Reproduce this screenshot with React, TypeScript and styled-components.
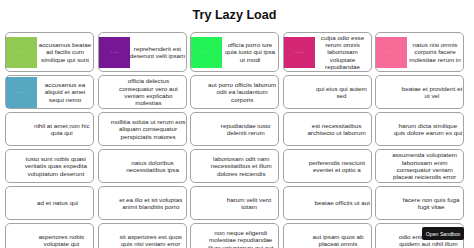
import React from 'react';
import styled, { createGlobalStyle } from 'styled-components';

const GlobalStyle = createGlobalStyle`
    html {
        scrollbar-width: none;
    }
    body {
        margin: 0;
        background: #ffffff;
        font-family: 'Liberation Sans', Arial, sans-serif;
        color: #2b2b2b;
    }
`;

type Photo = {
    id: number;
    title: string;
    color?: string;
};

const photos: Photo[] = [
    { id: 1, title: 'accusamus beatae ad facilis cum similique qui sunt', color: '#92c952' },
    { id: 2, title: 'reprehenderit est deserunt velit ipsam', color: '#771796' },
    { id: 3, title: 'officia porro iure quia iusto qui ipsa ut modi', color: '#24f355' },
    { id: 4, title: 'culpa odio esse rerum omnis laboriosam voluptate repudiandae', color: '#d32776' },
    { id: 5, title: 'natus nisi omnis corporis facere molestiae rerum in', color: '#f66b97' },
    { id: 6, title: 'accusamus ea aliquid et amet sequi nemo', color: '#56a8c2' },
    { id: 7, title: 'officia delectus consequatur vero aut veniam explicabo molestias' },
    { id: 8, title: 'aut porro officiis laborum odit ea laudantium corporis' },
    { id: 9, title: 'qui eius qui autem sed' },
    { id: 10, title: 'beatae et provident et ut vel' },
    { id: 11, title: 'nihil at amet non hic quia qui' },
    { id: 12, title: 'mollitia soluta ut rerum eos aliquam consequatur perspiciatis maiores' },
    { id: 13, title: 'repudiandae iusto deleniti rerum' },
    { id: 14, title: 'est necessitatibus architecto ut laborum' },
    { id: 15, title: 'harum dicta similique quis dolore earum ex qui' },
    { id: 16, title: 'iusto sunt nobis quasi veritatis quas expedita voluptatum deserunt' },
    { id: 17, title: 'natus doloribus necessitatibus ipsa' },
    { id: 18, title: 'laboriosam odit nam necessitatibus et illum dolores reiciendis' },
    { id: 19, title: 'perferendis nesciunt eveniet et optio a' },
    { id: 20, title: 'assumenda voluptatem laboriosam enim consequatur veniam placeat reiciendis error' },
    { id: 21, title: 'ad et natus qui' },
    { id: 22, title: 'et ea illo et sit voluptas animi blanditiis porro' },
    { id: 23, title: 'harum velit vero totam' },
    { id: 24, title: 'beatae officiis ut aut' },
    { id: 25, title: 'facere non quis fuga fugit vitae' },
    { id: 26, title: 'asperiores nobis voluptate qui' },
    { id: 27, title: 'sit asperiores est quos quis nisi veniam error' },
    { id: 28, title: 'non neque eligendi molestiae repudiandae illum voluptatem qui aut' },
    { id: 29, title: 'aut ipsam quos ab placeat omnis' },
    { id: 30, title: 'odio enim voluptatem quidem aut nihil illum' },
];

const Page = styled.div`
    padding: 8px 10px 8px 5px;
`;

const Title = styled.h1`
    margin: 0 0 10px;
    font-size: 12.6px;
    font-weight: 700;
    line-height: normal;
    text-align: center;
    color: #111111;
`;

const Grid = styled.div`
    display: grid;
    grid-template-columns: repeat(5, 89px);
    column-gap: 3.5px;
    row-gap: 3px;
`;

const Card = styled.div`
    display: flex;
    align-items: center;
    padding: 0.5px 0;
    border: 1px solid #a3a3a3;
    border-radius: 5px;
    min-width: 0;
`;

const Thumb = styled.div<{ $color?: string }>`
    display: flex;
    align-items: center;
    justify-content: center;
    width: 31px;
    height: 31px;
    flex-shrink: ${(p) => (p.$color ? 0 : 1)};
    background: ${(p) => p.$color ?? 'transparent'};
    font-size: 2px;
    color: rgba(255, 255, 255, 0.35);
`;

const Caption = styled.p`
    margin: 0;
    flex: 0 1 auto;
    font-size: 6.25px;
    line-height: 7.4px;
    text-align: center;
    color: #2b2b2b;
`;

const SandboxButton = styled.button`
    position: fixed;
    right: 10px;
    bottom: 8px;
    padding: 3.5px 3.6px;
    border: none;
    border-radius: 2px;
    background: #151515;
    color: #ffffff;
    font-family: 'Liberation Sans', Arial, sans-serif;
    font-size: 5.2px;
    line-height: 6px;
`;

const App = () => {
    return (
        <>
            <GlobalStyle />
            <Page>
                <Title>Try Lazy Load</Title>
                <Grid>
                    {photos.map((photo) => (
                        <Card key={photo.id}>
                            <Thumb $color={photo.color}>
                                {photo.color ? '150 x 150' : null}
                            </Thumb>
                            <Caption>{photo.title}</Caption>
                        </Card>
                    ))}
                </Grid>
            </Page>
            <SandboxButton>Open Sandbox</SandboxButton>
        </>
    );
};

export default App;
